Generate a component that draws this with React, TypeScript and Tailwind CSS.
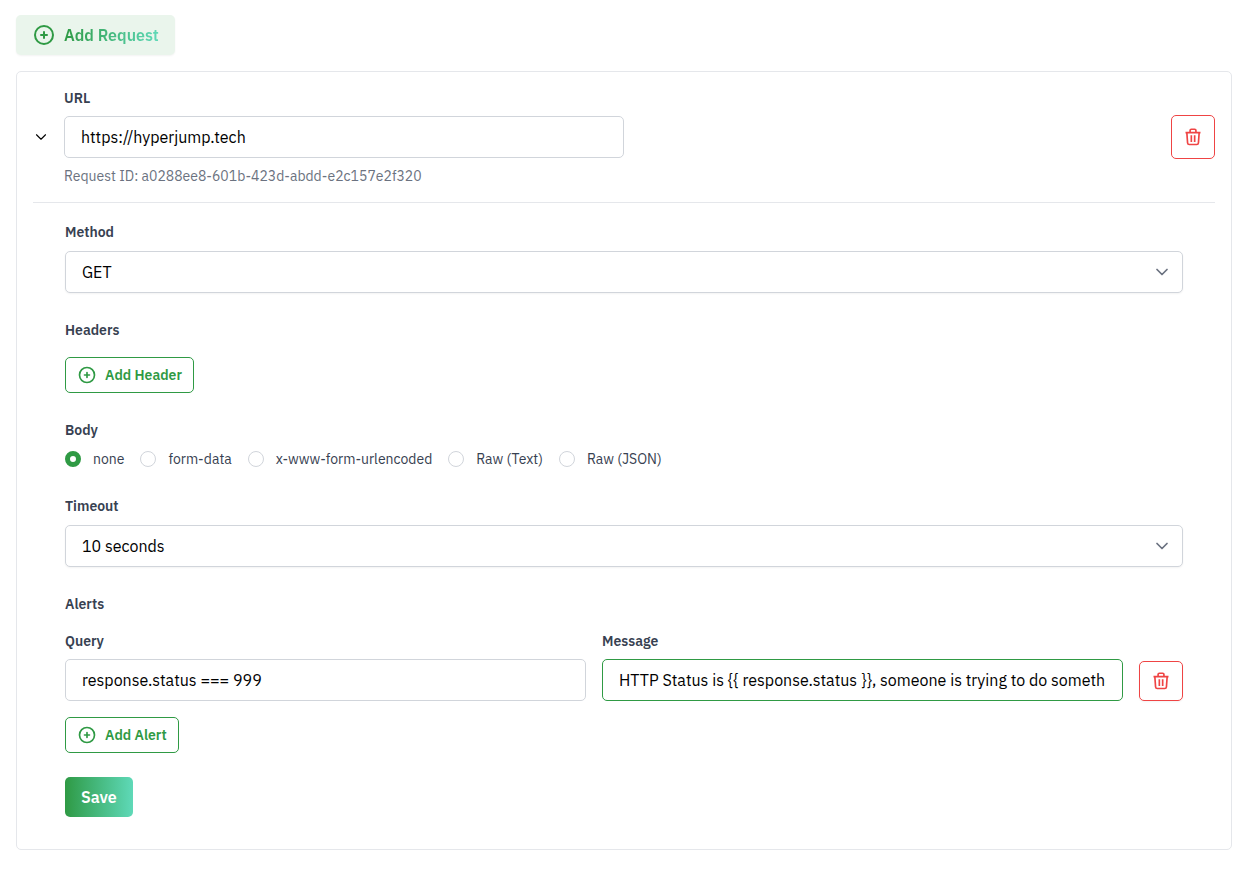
import { useState, type ReactNode } from "react";

function PlusCircle({ className }: { className: string }) {
  return (
    <svg className={className} viewBox="0 0 24 24" fill="none" stroke="currentColor" strokeWidth="2" strokeLinecap="round" aria-hidden="true">
      <circle cx="12" cy="12" r="9" />
      <path d="M12 9v6M9 12h6" />
    </svg>
  );
}

function Trash() {
  return (
    <svg className="size-5" viewBox="0 0 24 24" fill="none" stroke="currentColor" strokeWidth="2" strokeLinejoin="round" aria-hidden="true">
      <path d="M3 6.700h18M8.500 6.700V4.200a1.500 1.500 0 0 1 1.500-1.500h4a1.500 1.500 0 0 1 1.500 1.500v2.500M4.600 6.700l.9 12.500A2 2 0 0 0 7.500 21h9a2 2 0 0 0 2-1.800l.9-12.500M10 10v8M14 10v8" />
    </svg>
  );
}

function Chevron({ className }: { className: string }) {
  return (
    <svg className={className} viewBox="0 0 20 20" fill="none" stroke="currentColor" strokeLinecap="round" strokeLinejoin="round" aria-hidden="true">
      <path d="M5 7.500l5 5 5-5" />
    </svg>
  );
}

const heading = "text-sm font-semibold text-[#374151]";
const field = "h-[42px] w-full rounded-[5px] border bg-white px-4 text-base text-black outline-none";

function SelectField({ id, label, options }: { id: string; label: string; options: string[] }) {
  return (
    <div className="flex flex-col gap-[9px]">
      <label htmlFor={id} className={heading}>{label}</label>
      <div className="relative">
        <select id={id} className={`${field} appearance-none border-[#d1d5db] shadow-xs`}>
          {options.map((o) => <option key={o}>{o}</option>)}
        </select>
        <Chevron className="pointer-events-none absolute right-[11px] top-[11px] size-5 stroke-[1.75] text-[#6b7280]" />
      </div>
    </div>
  );
}

function OutlineButton({ children }: { children: ReactNode }) {
  return (
    <button type="button" className="flex h-9 items-center gap-2 self-start rounded-[5px] border border-[#2f9a44] px-[11px] text-sm font-semibold text-[#2f9a44]">
      <PlusCircle className="size-5" />
      {children}
    </button>
  );
}

const bodyTypes = ["none", "form-data", "x-www-form-urlencoded", "Raw (Text)", "Raw (JSON)"];

export default function App() {
  const [body, setBody] = useState("none");
  return (
    <main className="flex flex-col items-start gap-4 py-[15px] pr-[18px] pl-4 font-['IBM_Plex_Sans',Roboto,sans-serif]">
      <button type="button" className="flex h-10 items-center gap-2 rounded-[5px] bg-[#eaf5ec] px-4 text-base font-semibold shadow-xs">
        <PlusCircle className="size-6 text-[#2f9a44]" />
        <span className="bg-linear-to-r from-[#2f9a44] to-[#5fd9b8] bg-clip-text text-transparent">Add Request</span>
      </button>

      <form className="w-full rounded-[5px] border border-[#e5e7eb] px-4 pt-4 pb-8" onSubmit={(e) => e.preventDefault()}>
        <div className="flex items-center justify-between border-b border-[#e5e7eb] pb-4">
          <div className="flex items-center gap-4">
            <button type="button" aria-label="Collapse request" className="flex h-4 w-[15px] items-center justify-center text-black">
              <Chevron className="size-[18px] shrink-0 stroke-[1.25]" />
            </button>
            <div className="flex flex-col gap-2">
              <label htmlFor="url" className={heading}>URL</label>
              <input id="url" className="h-[42px] w-[560px] rounded-[5px] border border-[#d1d5db] px-4 text-base text-black outline-none" defaultValue="https://hyperjump.tech" />
              <p className="text-sm text-[#6b7280]">Request ID: a0288ee8-601b-423d-abdd-e2c157e2f320</p>
            </div>
          </div>
          <button type="button" aria-label="Delete request" className="flex size-11 items-center justify-center rounded-[5px] border border-[#ef4444] text-[#ef4444]">
            <Trash />
          </button>
        </div>

        <div className="flex flex-col px-8 pt-[19px]">
          <SelectField id="method" label="Method" options={["GET", "POST", "PUT", "PATCH", "DELETE"]} />

          <section className="flex flex-col gap-[17px] pt-[27px]">
            <h2 className={heading}>Headers</h2>
            <OutlineButton>Add Header</OutlineButton>
          </section>

          <fieldset className="pt-[27px]">
            <legend className="contents">
              <span className={`${heading} block`}>Body</span>
            </legend>
            <div className="flex gap-4 pt-[9px]">
              {bodyTypes.map((t) => (
                <label key={t} className="flex items-center gap-3 text-sm text-[#374151]">
                  <input
                    type="radio"
                    name="body"
                    checked={body === t}
                    onChange={() => setBody(t)}
                    className="size-4 appearance-none rounded-full border border-[#d1d5db] bg-white checked:border-[5px] checked:border-[#2f9a44]"
                  />
                  {t}
                </label>
              ))}
            </div>
          </fieldset>

          <div className="pt-[27px]">
            <SelectField id="timeout" label="Timeout" options={["10 seconds", "20 seconds", "30 seconds"]} />
          </div>

          <section className="flex flex-col gap-[17px] pt-[27px]">
            <h2 className={heading}>Alerts</h2>
            <div className="flex items-end gap-4">
              <div className="flex min-w-0 flex-1 flex-col gap-2">
                <label htmlFor="query" className={heading}>Query</label>
                <input id="query" className={`${field} border-[#d1d5db]`} defaultValue="response.status === 999" />
              </div>
              <div className="flex min-w-0 flex-1 flex-col gap-2">
                <label htmlFor="message" className={heading}>Message</label>
                <input id="message" className={`${field} border-[#2f9a44]`} defaultValue="HTTP Status is {{ response.status }}, someone is trying to do something" />
              </div>
              <button type="button" aria-label="Delete alert" className="flex h-10 w-11 items-center justify-center rounded-[5px] border border-[#ef4444] text-[#ef4444] shadow-xs">
                <Trash />
              </button>
            </div>
          </section>

          <div className="flex flex-col gap-6 pt-4">
            <OutlineButton>Add Alert</OutlineButton>
            <button type="submit" className="h-10 self-start rounded-[5px] bg-linear-to-r from-[#2f9a44] to-[#5fd9b8] px-4 text-base font-semibold text-white">
              Save
            </button>
          </div>
        </div>
      </form>
    </main>
  );
}
